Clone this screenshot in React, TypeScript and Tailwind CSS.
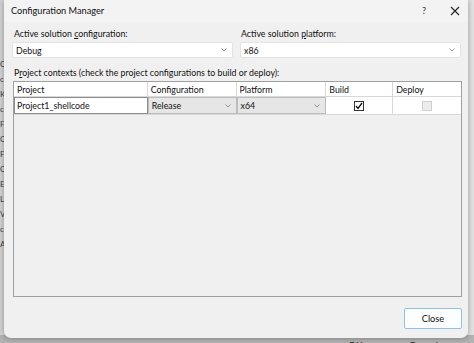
const Chevron = () => (
  <svg width="6" height="4" viewBox="0 0 6 4" className="shrink-0">
    <path d="M0.5 0.5 L3 3 L5.5 0.5" fill="none" stroke="#8a8a8a" strokeWidth="0.9" />
  </svg>
);

const Combo = ({ value }: { value: string }) => (
  <div className="h-[16px] flex items-center justify-between bg-white border border-[#e3e3e3] rounded-[2px] pl-[3px] pr-[5px]">
    <span>{value}</span>
    <Chevron />
  </div>
);

const columns = [
  { name: "Project", w: "w-[134px]" },
  { name: "Configuration", w: "w-[89px]" },
  { name: "Platform", w: "w-[90px]" },
  { name: "Build", w: "w-[67px]" },
  { name: "Deploy", w: "w-[68px]" },
];

export default function App() {
  return (
    <div className="relative w-[474px] h-[343px] overflow-hidden bg-[#b9b9b9] font-['Lato',sans-serif] text-[8.8px] text-[#111]">
      {/* window behind the dialog */}
      <div className="absolute left-0 top-0 w-[6px] h-full bg-[#d6d6d6] flex flex-col gap-[7px] pt-[60px] text-[8px] leading-none text-[#444] overflow-hidden">
        <span>C</span><span>c</span><span>K</span><span>c</span><span>F</span><span>C</span><span>F</span><span>C</span><span>E</span><span>L</span><span>V</span><span>c</span><span>A</span>
      </div>
      <div className="absolute right-0 top-0 w-[8px] h-full bg-[#e4e4e4] border-l border-[#c8c8c8]" />
      <div className="absolute left-0 bottom-0 w-full h-[8px] bg-[#b3b3b3] flex text-[10px] leading-[20px] text-[#222]">
        <span className="ml-[348px]">OK</span>
        <span className="ml-[46px]">Cancel</span>
      </div>

      {/* dialog */}
      <div className="absolute left-[4px] top-0 w-[464px] h-[338px] bg-[#f0f0f0] rounded-b-[7px] shadow-[0_0_6px_rgba(0,0,0,0.35)] flex flex-col">
        <div className="h-[22px] flex items-center pl-[7px] pr-[8px] text-[9.2px] bg-[#f3f3f3]">
          <span className="flex-1">Configuration Manager</span>
          <span className="mr-[24px] text-[#333]">?</span>
          <svg width="10" height="10" viewBox="0 0 10 10">
            <path d="M1 1 L9 9 M9 1 L1 9" stroke="#222" strokeWidth="1.1" />
          </svg>
        </div>

        <div className="flex gap-[7px] pl-[8px] pr-[7px] mt-[5px]">
          <div className="w-[221px] flex flex-col gap-[2px]">
            <span className="pl-[2px]">Active solution <u>c</u>onfiguration:</span>
            <Combo value="Debug" />
          </div>
          <div className="w-[221px] flex flex-col gap-[2px]">
            <span className="pl-[1px]">Active solution <u>p</u>latform:</span>
            <Combo value="x86" />
          </div>
        </div>

        <span className="pl-[10px] mt-[8px]">P<u>r</u>oject contexts (check the project configurations to build or deploy):</span>

        <div className="ml-[9px] mt-[2px] w-[449px] h-[216px] border border-[#a0a0a0] bg-[#f0f0f0] flex flex-col">
          <div className="flex h-[15px] bg-white border-b border-[#d8d8d8]">
            {columns.map((c, i) => (
              <div key={c.name} className={`${c.w} h-full flex items-center pl-[3px] ${i < 4 ? "border-r border-[#d8d8d8]" : ""}`}>
                {c.name}
              </div>
            ))}
          </div>
          <div className="flex h-[18px] bg-white border-b border-[#d8d8d8]">
            <div className="w-[134px] h-full flex items-center pl-[2px] border border-[#8c8c8c]">
              Project1_shellcode
            </div>
            <div className="w-[89px] h-full flex items-center justify-between pl-[3px] pr-[5px] bg-[#e6e6e6] border border-[#bcbcbc]">
              <span>Release</span>
              <Chevron />
            </div>
            <div className="w-[90px] h-full flex items-center justify-between pl-[3px] pr-[5px] bg-[#e6e6e6] border border-[#bcbcbc]">
              <span>x64</span>
              <Chevron />
            </div>
            <div className="w-[67px] h-full flex items-center justify-center border-r border-[#d8d8d8]">
              <div className="w-[10px] h-[10px] border border-[#333] bg-white flex items-center justify-center">
                <svg width="8" height="8" viewBox="0 0 8 8">
                  <path d="M1 4 L3 6.5 L7 1" fill="none" stroke="#111" strokeWidth="1.3" />
                </svg>
              </div>
            </div>
            <div className="w-[68px] h-full flex items-center justify-center">
              <div className="w-[10px] h-[10px] border border-[#cfcfcf] bg-[#ededed]" />
            </div>
          </div>
        </div>

        <div className="flex justify-end pr-[6px] mt-[11px]">
          <button className="w-[58px] h-[21px] bg-[#fbfdff] border border-[#8fc1e8] rounded-[2px] text-[9.2px]">
            Close
          </button>
        </div>
      </div>
    </div>
  );
}
